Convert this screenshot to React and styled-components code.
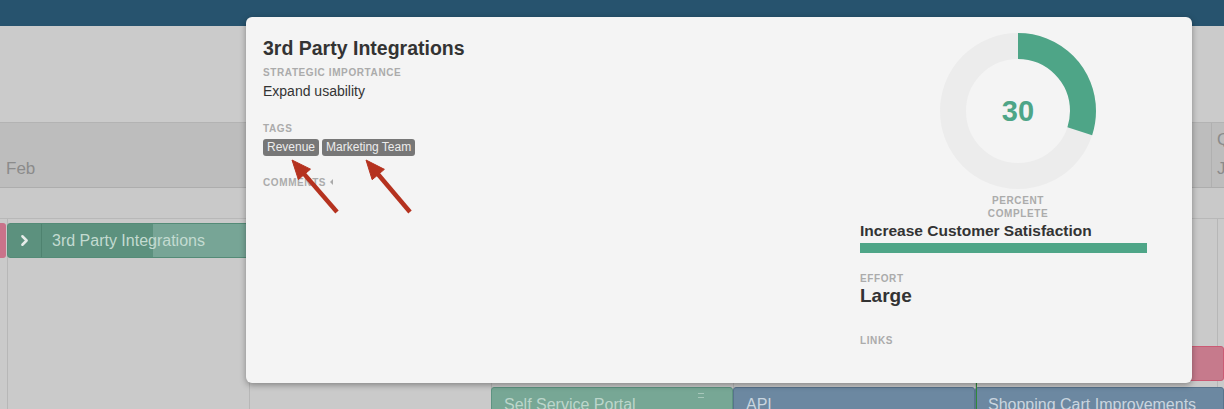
import React from "react";
import styled, { createGlobalStyle } from "styled-components";
import { ChevronRight } from "lucide-react";

const GlobalStyle = createGlobalStyle`
  html, body {
    margin: 0;
    padding: 0;
    background: #cacaca;
  }
  body {
    font-family: "Liberation Sans", Arial, sans-serif;
  }
`;

const Page = styled.div`
  position: relative;
  width: 1224px;
  height: 409px;
  overflow: hidden;
  display: flex;
  flex-direction: column;
  background: #cacaca;
`;

const TopBar = styled.div`
  flex: 0 0 26px;
  background: #27536e;
`;

const Toolbar = styled.div`
  flex: 0 0 96px;
  background: #cbcbcb;
  border-bottom: 1px solid #b3b3b3;
`;

const HeaderRow = styled.div`
  flex: 0 0 64px;
  display: flex;
  background: #bdbdbd;
  border-bottom: 1px solid #adadad;
`;

const MonthCell = styled.div`
  flex: 0 0 ${(p) => p.$width || "auto"};
  display: flex;
  flex-direction: column;
  justify-content: flex-end;
  padding: 0 0 4px 6px;
  font-size: 17px;
  line-height: 29px;
  color: #8b8b8b;
  white-space: nowrap;
  box-sizing: border-box;
  & + & {
    border-left: 1px solid #b0b0b0;
    padding-left: 5px;
  }
`;

const SubRow = styled.div`
  flex: 0 0 30px;
  background: #c9c9c9;
  border-bottom: 1px solid #b8b8b8;
`;

const Body = styled.div`
  position: relative;
  flex: 1;
  display: grid;
  grid-template-columns: 7px repeat(5, 242px) 1fr;
  grid-auto-rows: 35px;
  row-gap: 6px;
  padding-top: 4px;
  background-color: #cacaca;
  background-image: linear-gradient(to right, #b7b7b7 1px, transparent 1px);
  background-size: 242px 100%;
  background-position: 7px 0;
`;

const barColors = {
  green: { bg: "#77a795", border: "#5e9482", text: "#bcd6cb" },
  blue: { bg: "#6c88a1", border: "#58738c", text: "#c9d5df" },
  pink: { bg: "#c67a8c", border: "#cb5a74", text: "#ecd0d7" },
};

const Bar = styled.div`
  grid-row: ${(p) => p.$row};
  grid-column: ${(p) => p.$col};
  position: relative;
  display: flex;
  align-items: center;
  overflow: hidden;
  box-sizing: border-box;
  border: 1px solid ${(p) => barColors[p.$tone].border};
  border-radius: 3px;
  background: ${(p) => barColors[p.$tone].bg};
  color: ${(p) => barColors[p.$tone].text};
  font-size: 16px;
  white-space: nowrap;
  padding-left: 12px;
`;

const PinkStub = styled.div`
  grid-row: 1;
  grid-column: 1;
  margin-right: 1px;
  background: #c9738a;
  border-radius: 0 3px 3px 0;
`;

const ProgressBar = styled.div`
  grid-row: 1;
  grid-column: 2 / 4;
  display: flex;
  box-sizing: border-box;
  border: 1px solid #548b77;
  border-radius: 3px;
  overflow: hidden;
  background: linear-gradient(to right, #5c917e 30%, #77a596 30%);
  color: #c3dbd1;
  font-size: 16px;
  white-space: nowrap;
`;

const ChevronCell = styled.div`
  flex: 0 0 33px;
  display: flex;
  align-items: center;
  justify-content: center;
  border-right: 1px solid #4e826f;
  color: #e6ece9;
`;

const BarLabel = styled.div`
  display: flex;
  align-items: center;
  padding-left: 10px;
`;

const Handle = styled.span`
  position: absolute;
  top: 5px;
  right: 28px;
  width: 6px;
  height: 3px;
  border-top: 1px solid #a7c7ba;
  border-bottom: 1px solid #a7c7ba;
`;

const TodayLine = styled.div`
  position: absolute;
  top: 0;
  bottom: 0;
  left: 976px;
  width: 1px;
  background: #2f8a3a;
`;

const Popup = styled.div`
  position: absolute;
  left: 246px;
  top: 17px;
  width: 946px;
  height: 366px;
  box-sizing: border-box;
  padding: 19px 16px 0 17px;
  display: flex;
  justify-content: space-between;
  background: #f4f4f4;
  border-radius: 6px;
  box-shadow: 0 2px 6px rgba(0, 0, 0, 0.35);
  color: #333;
`;

const Column = styled.div`
  display: flex;
  flex-direction: column;
  align-items: flex-start;
`;

const RightColumn = styled(Column)`
  width: 316px;
  margin-top: -3px;
`;

const Title = styled.h2`
  margin: 0;
  font-size: 19.5px;
  line-height: 24px;
  font-weight: bold;
  color: #333;
`;

const Label = styled.div`
  font-size: 10px;
  line-height: 13px;
  font-weight: bold;
  letter-spacing: 0.6px;
  color: #ababab;
  text-transform: uppercase;
  margin-top: ${(p) => p.$mt || 0}px;
  text-align: ${(p) => (p.$center ? "center" : "left")};
  align-self: ${(p) => (p.$center ? "center" : "flex-start")};
`;

const Value = styled.div`
  font-size: 14px;
  line-height: 18px;
  margin-top: 3px;
  color: #333;
`;

const Tags = styled.div`
  display: flex;
  gap: 3px;
  margin-top: 4px;
`;

const Tag = styled.span`
  padding: 2px 4px;
  font-size: 12px;
  line-height: 13px;
  color: #ececec;
  background: #777;
  border-radius: 3px;
`;

const Caret = styled.span`
  display: inline-block;
  margin-left: 4px;
  border-top: 3px solid transparent;
  border-bottom: 3px solid transparent;
  border-right: 3px solid #aaa;
  vertical-align: 1px;
`;

const DonutWrap = styled.div`
  position: relative;
  align-self: center;
  width: 156px;
  height: 156px;
`;

const DonutValue = styled.div`
  position: absolute;
  inset: 0;
  display: flex;
  align-items: center;
  justify-content: center;
  font-size: 29px;
  font-weight: bold;
  color: #4ea587;
`;

const Goal = styled.div`
  font-size: 15.5px;
  line-height: 18px;
  font-weight: bold;
  margin-top: 2px;
  color: #333;
`;

const GoalBar = styled.div`
  width: 287px;
  height: 10px;
  margin-top: 3px;
  background: #4ea587;
`;

const Effort = styled.div`
  font-size: 19px;
  line-height: 22px;
  font-weight: bold;
  color: #333;
`;

const Annotations = styled.svg`
  position: absolute;
  left: 0;
  top: 0;
  pointer-events: none;
`;

function Donut({ percent }) {
  const r = 65;
  const c = 2 * Math.PI * r;
  return (
    <DonutWrap>
      <svg width="156" height="156" viewBox="0 0 156 156">
        <circle cx="78" cy="78" r={r} fill="none" stroke="#ececec" strokeWidth="26" />
        <circle
          cx="78"
          cy="78"
          r={r}
          fill="none"
          stroke="#4ea587"
          strokeWidth="26"
          strokeDasharray={`${(c * percent) / 100} ${c}`}
          transform="rotate(-90 78 78)"
        />
      </svg>
      <DonutValue>{percent}</DonutValue>
    </DonutWrap>
  );
}

function Arrow({ tail, tip }) {
  const dx = tip[0] - tail[0];
  const dy = tip[1] - tail[1];
  const len = Math.hypot(dx, dy);
  const ux = dx / len;
  const uy = dy / len;
  const bx = tip[0] - ux * 19;
  const by = tip[1] - uy * 19;
  const px = -uy * 8;
  const py = ux * 8;
  return (
    <g fill="#b5321f" stroke="#b5321f">
      <line x1={tail[0]} y1={tail[1]} x2={bx + ux * 2} y2={by + uy * 2} strokeWidth="4.5" />
      <polygon
        points={`${tip[0]},${tip[1]} ${bx + px},${by + py} ${bx - px},${by - py}`}
        strokeWidth="1"
      />
    </g>
  );
}

export default function App() {
  return (
    <>
      <GlobalStyle />
      <Page>
        <TopBar />
        <Toolbar />
        <HeaderRow>
          <MonthCell $width="1211px">Feb</MonthCell>
          <MonthCell>
            <span>Q2</span>
            <span>Jun</span>
          </MonthCell>
        </HeaderRow>
        <SubRow />
        <Body>
          <PinkStub />
          <ProgressBar>
            <ChevronCell>
              <ChevronRight size={17} strokeWidth={3.5} />
            </ChevronCell>
            <BarLabel>3rd Party Integrations</BarLabel>
          </ProgressBar>
          <Bar $row={4} $col="5 / 8" $tone="pink" />
          <Bar $row={5} $col="4 / 5" $tone="green">
            Self Service Portal
            <Handle />
          </Bar>
          <Bar $row={5} $col="5 / 6" $tone="blue">API</Bar>
          <Bar $row={5} $col="6 / 8" $tone="blue">Shopping Cart Improvements</Bar>
          <TodayLine />
        </Body>

        <Popup>
          <Column>
            <Title>3rd Party Integrations</Title>
            <Label $mt={6}>Strategic Importance</Label>
            <Value>Expand usability</Value>
            <Label $mt={22}>Tags</Label>
            <Tags>
              <Tag>Revenue</Tag>
              <Tag>Marketing Team</Tag>
            </Tags>
            <Label $mt={20}>
              Comments
              <Caret />
            </Label>
          </Column>
          <RightColumn>
            <Donut percent={30} />
            <Label $center $mt={5}>
              Percent
              <br />
              Complete
            </Label>
            <Goal>Increase Customer Satisfaction</Goal>
            <GoalBar />
            <Label $mt={19}>Effort</Label>
            <Effort>Large</Effort>
            <Label $mt={27}>Links</Label>
          </RightColumn>
        </Popup>

        <Annotations width="1224" height="409" viewBox="0 0 1224 409">
          <Arrow tail={[337, 212]} tip={[292, 160]} />
          <Arrow tail={[410, 212]} tip={[366, 160]} />
        </Annotations>
      </Page>
    </>
  );
}
